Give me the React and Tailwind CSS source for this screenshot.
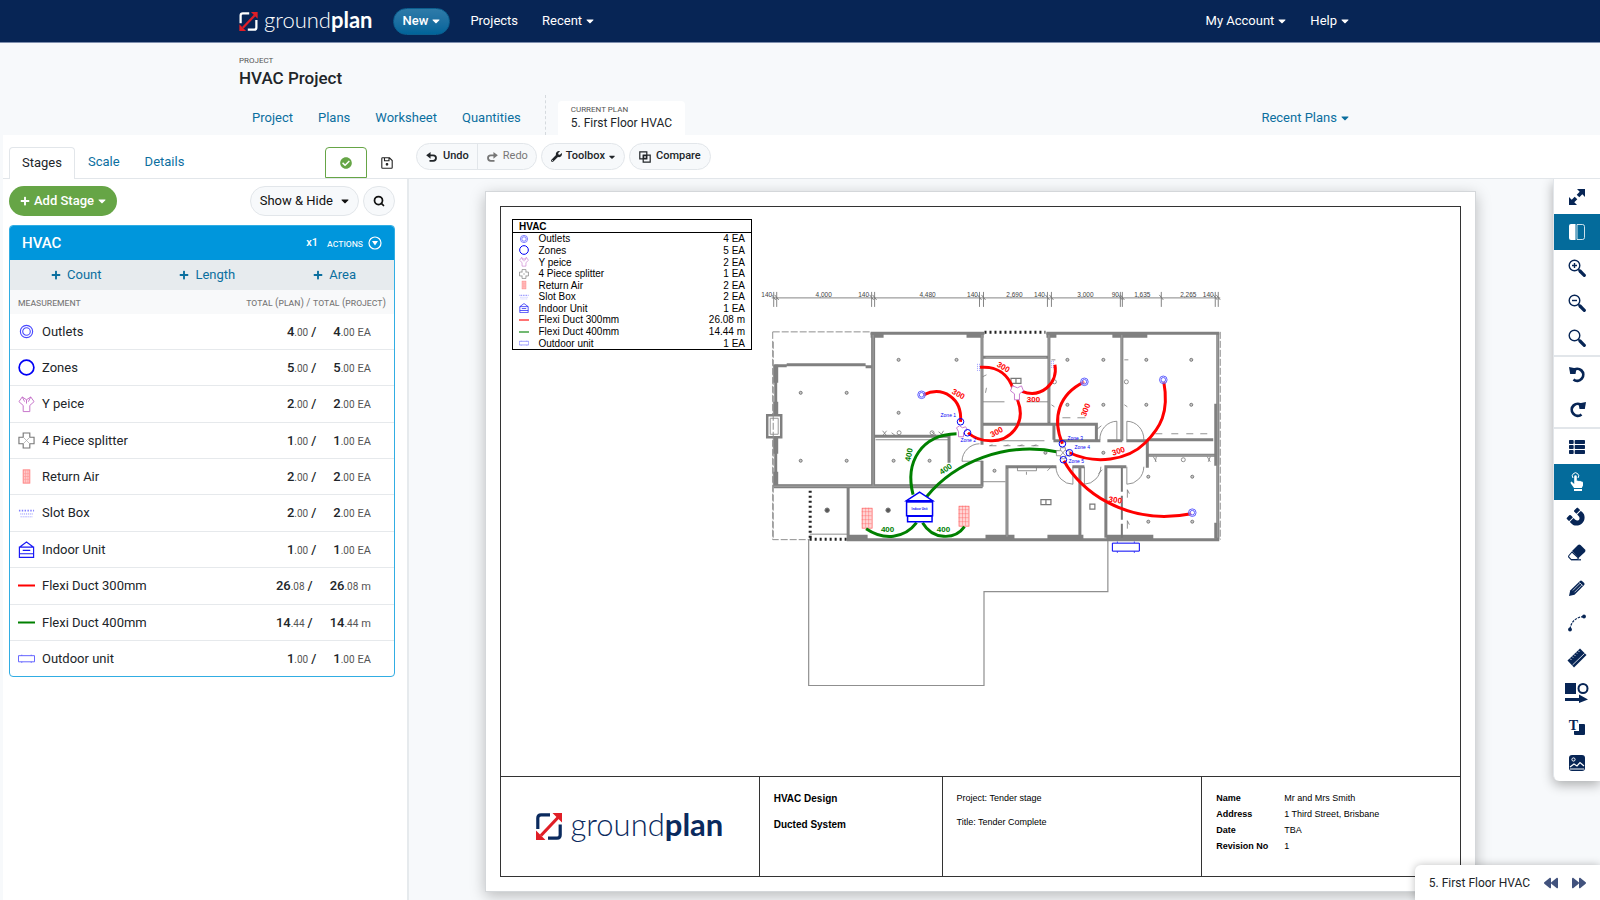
import { FaCaretDown, FaCheckCircle, FaMagnet, FaPlus, FaThList, FaWrench } from 'react-icons/fa';
import { FaBackward, FaForward } from 'react-icons/fa';
import { Search } from 'lucide-react';
import { clsx } from 'clsx';

const measurements = [
    { name: 'Outlets', icon: 'outlet', total: '4.00', unit: 'EA', legend: '4 EA' },
    { name: 'Zones', icon: 'zone', total: '5.00', unit: 'EA', legend: '5 EA' },
    { name: 'Y peice', icon: 'ypiece', total: '2.00', unit: 'EA', legend: '2 EA' },
    { name: '4 Piece splitter', icon: 'splitter', total: '1.00', unit: 'EA', legend: '1 EA' },
    { name: 'Return Air', icon: 'return', total: '2.00', unit: 'EA', legend: '2 EA' },
    { name: 'Slot Box', icon: 'slot', total: '2.00', unit: 'EA', legend: '2 EA' },
    { name: 'Indoor Unit', icon: 'indoor', total: '1.00', unit: 'EA', legend: '1 EA' },
    { name: 'Flexi Duct 300mm', icon: 'red', total: '26.08', unit: 'm', legend: '26.08 m' },
    { name: 'Flexi Duct 400mm', icon: 'green', total: '14.44', unit: 'm', legend: '14.44 m' },
    { name: 'Outdoor unit', icon: 'outdoor', total: '1.00', unit: 'EA', legend: '1 EA' },
];

function Symbol({ type, className }) {
    return (
        <svg viewBox="0 0 18 18" className={className} fill="none" aria-hidden="true">
            {type === 'outlet' && (
                <g stroke="#4a4aff" strokeWidth="1.200">
                    <circle cx="9" cy="9" r="6.500" />
                    <circle cx="9" cy="9" r="4" />
                </g>
            )}
            {type === 'zone' && <circle cx="9" cy="9" r="7.800" stroke="#0000f5" strokeWidth="1.800" />}
            {type === 'ypiece' && (
                <path d="M5.500 16.500V10L1 6l3.500-5L9 4l4.500-3L17 6l-4.500 4v6.500zM9 4v4M4.500 1l2.500 5M13.500 1L11 6" stroke="#c36fc8" />
            )}
            {type === 'splitter' && (
                <g>
                    <path d="M5.500 1h7v4.500H17v7h-4.500V17h-7v-4.500H1v-7h4.500z" stroke="#777" strokeWidth="1.200" />
                    <path d="M6 6l6 6M12 6l-6 6" stroke="#aaa" strokeWidth=".8" />
                </g>
            )}
            {type === 'return' && (
                <g>
                    <rect x="5.500" y="2" width="7" height="14" fill="#ffc9c9" stroke="#ff8080" />
                    <path d="M8 2v14M10.500 2v14M6 6h6M6 9h6M6 12h6" stroke="#ff9a9a" strokeWidth=".7" />
                </g>
            )}
            {type === 'slot' && (
                <g stroke="#8080ff">
                    <path d="M1 6h16" strokeWidth="2" strokeDasharray="1.500 1.500" />
                    <path d="M2.500 9.500h13" strokeDasharray="1 1" />
                    <path d="M2.500 12.500h13" stroke="#b9b9ff" strokeDasharray="2 .5" />
                </g>
            )}
            {type === 'indoor' && (
                <path d="M1.500 6.500L9 1l7.500 5.500M1.500 6.500h15V17.300h-15zM1.500 13.500h15M5 10h8" stroke="#1a1af5" strokeWidth="1.300" />
            )}
            {type === 'red' && <path d="M0 9h18" stroke="red" strokeWidth="2" />}
            {type === 'green' && <path d="M0 9h18" stroke="green" strokeWidth="2" />}
            {type === 'outdoor' && (
                <path d="M.5 6h17v6.500H.5zM4 5v1M14 5v1M4 12.500v1M14 12.500v1" stroke="#5c5cff" />
            )}
        </svg>
    );
}

function LogoMark({ className }) {
    return (
        <svg viewBox="0 0 26 27" className={className} aria-hidden="true">
            <path d="M14 1.800H5Q1.800 1.800 1.800 5v11M12 25.200h9Q24.200 25.200 24.200 22V11.500" fill="none" stroke="currentColor" strokeWidth="3.200" />
            <path d="M5 22.500L22 4.500" stroke="#e01e26" strokeWidth="3.200" />
            <path d="M16.500 0H26v9.500zM0 17.500V27h9.500z" fill="#e01e26" />
        </svg>
    );
}

function Header() {
    return (
        <header className="border-b border-[#7f8fae] bg-[#072555] pr-3 text-white">
            <div className="mx-auto flex h-[42px] max-w-[1110px] items-center text-[13px]">
                <a href="#home" className="flex items-center gap-[6px]">
                    <LogoMark className="h-[19px] w-[19px]" />
                    <span className="pb-[3px] font-['Lato',sans-serif] text-[22px] leading-6 font-light">
                        ground<b className="font-bold">plan</b>
                    </span>
                </a>
                <button type="button" className="ml-5 flex h-[27px] items-center gap-1 rounded-full border border-[#0b5f8f] bg-gradient-to-b from-[#2e7ba9] to-[#00649a] px-[9px] font-medium">
                    New <FaCaretDown className="h-3 w-2" />
                </button>
                <a href="#projects" className="ml-5">Projects</a>
                <button type="button" className="ml-6 flex items-center gap-1">
                    Recent <FaCaretDown className="h-3 w-2" />
                </button>
                <div className="ml-auto flex gap-6">
                    <button type="button" className="flex items-center gap-1">
                        My Account <FaCaretDown className="h-3 w-2" />
                    </button>
                    <button type="button" className="flex items-center gap-1">
                        Help <FaCaretDown className="h-3 w-2" />
                    </button>
                </div>
            </div>
        </header>
    );
}

function ProjectBar() {
    return (
        <div className="bg-[#f7f9fb] pr-3">
            <div className="mx-auto max-w-[1110px]">
                <p className="pt-3 text-[8px] leading-3 text-[#555]">PROJECT</p>
                <h1 className="text-[17px] leading-[22px] font-medium text-[#212529]">HVAC Project</h1>
                <div className="mt-[6px] flex h-10 text-[13px] text-[#0b6f9f]">
                    <nav className="flex items-center gap-[25px] border-r border-dashed border-[#d5dade] pr-6 pl-[13px] pt-[6px]">
                        <a href="#project">Project</a>
                        <a href="#plans">Plans</a>
                        <a href="#worksheet">Worksheet</a>
                        <a href="#quantities">Quantities</a>
                    </nav>
                    <a href="#plan" className="mt-[6px] ml-3 rounded-t bg-white px-[13px] pt-[3px] text-[#212529]">
                        <span className="block text-[8px] leading-3 text-[#555]">CURRENT PLAN</span>
                        <span className="block text-xs leading-[14px]">5. First Floor HVAC</span>
                    </a>
                    <button type="button" className="ml-auto flex items-center gap-1 pt-[6px]">
                        Recent Plans <FaCaretDown className="h-3 w-2" />
                    </button>
                </div>
            </div>
        </div>
    );
}

function Amount({ value }) {
    const [whole, decimals] = value.split('.');
    return (
        <>
            <span className="font-medium text-[#212529]">{whole}</span>
            <span className="text-[10px]">.{decimals}</span>
        </>
    );
}

function StagesPanel() {
    return (
        <aside className="flex w-[409px] shrink-0 flex-col border-l-[3px] border-l-[#f7f9fb]">
            <div className="mt-3 flex h-8 border-b border-[#e2e6ea] pl-[6px] text-[13px] text-[#0b6f9f]">
                <button type="button" className="-mb-px rounded-t border border-b-0 border-[#e2e6ea] bg-white px-3 pb-[2px] text-[#212529]">Stages</button>
                <button type="button" className="px-[13px] pb-[2px]">Scale</button>
                <button type="button" className="px-3 pb-[2px]">Details</button>
                <button type="button" aria-label="Saved" className="ml-auto flex w-[42px] items-center justify-center rounded-t-sm border border-[#66a546] text-[#66a546]">
                    <FaCheckCircle className="h-3 w-3" />
                </button>
                <button type="button" aria-label="Save" className="mr-[2px] flex w-10 items-center justify-center text-[#222]">
                    <svg viewBox="0 0 12 12" className="h-3 w-3" fill="none" stroke="currentColor" strokeWidth="1.100">
                        <path d="M1.500.8h7l2.700 2.700v7q0 .7-.7.7h-9q-.7 0-.7-.7v-9q0-.7.7-.7zM3.500 1v2.700h4.500V1" />
                        <circle cx="6" cy="7.300" r=".8" fill="currentColor" />
                    </svg>
                </button>
            </div>
            <div className="flex-1 border-r-2 border-[#e6eaed] pt-[7px] pr-3 pb-6 pl-[6px]">
                <div className="flex h-[30px] text-[13px]">
                    <button type="button" className="flex items-center gap-1 rounded-full bg-[#66a546] px-[11px] font-medium text-white">
                        <FaPlus className="h-[10px] w-[10px]" /> Add Stage <FaCaretDown className="h-3 w-2" />
                    </button>
                    <button type="button" className="ml-auto flex items-center gap-2 rounded-full border border-[#e2e6ea] bg-[#f7f9fb] px-[9px] text-[#111]">
                        Show &amp; Hide <FaCaretDown className="h-3 w-2" />
                    </button>
                    <button type="button" aria-label="Search" className="ml-1 flex w-8 items-center justify-center rounded-full border border-[#e2e6ea] bg-[#f7f9fb] text-[#111]">
                        <Search className="h-3 w-3" strokeWidth={3.500} />
                    </button>
                </div>

                <section className="mt-[9px] overflow-hidden rounded border border-[#31ade3]">
                    <div className="flex h-[34px] items-center bg-[#0096dc] px-3 text-white">
                        <h2 className="text-[15px] font-medium">HVAC</h2>
                        <span className="ml-auto text-[11px] font-medium">x1</span>
                        <button type="button" className="ml-[9px] flex items-center gap-[5px] text-[10px]">
                            <span className="[font-variant:small-caps]">actions</span>
                            <svg viewBox="0 0 14 14" className="h-[14px] w-[14px]" aria-hidden="true">
                                <circle cx="7" cy="7" r="6" fill="none" stroke="currentColor" strokeWidth="1.200" />
                                <path d="M4 5h6L7 9.500z" fill="currentColor" />
                            </svg>
                        </button>
                    </div>
                    <div className="flex h-[30px] items-center justify-between bg-[#e7ebee] pr-[38px] pl-[41px] text-[13px] text-[#0b6f9f]">
                        {['Count', 'Length', 'Area'].map((kind) => (
                            <button key={kind} type="button" className="flex items-center gap-[6px]">
                                <FaPlus className="h-[10px] w-[10px]" /> {kind}
                            </button>
                        ))}
                    </div>
                    <table className="h-[386px] w-full text-[13px] text-[#212529]">
                        <thead>
                            <tr className="h-6 bg-[#f8f9fa] text-[10px] text-[#777] [font-variant:small-caps]">
                                <th className="pl-2 text-left font-normal">measurement</th>
                                <th className="pr-2 text-right font-normal">total (plan) / total (project)</th>
                            </tr>
                        </thead>
                        <tbody>
                            {measurements.map((m) => (
                                <tr key={m.name} className="border-b border-[#e6e9ec] last:border-0">
                                    <td className="pl-2">
                                        <span className="flex items-center gap-[7px]">
                                            <Symbol type={m.icon} className="h-[17px] w-[17px]" /> {m.name}
                                        </span>
                                    </td>
                                    <td className="pr-[23px] text-right text-[#555]">
                                        <Amount value={m.total} />
                                        <span className="mr-[17px] ml-[3px] font-medium text-[#212529]">/</span>
                                        <Amount value={m.total} />
                                        <span className="ml-[3px] text-[11px]">{m.unit}</span>
                                    </td>
                                </tr>
                            ))}
                        </tbody>
                    </table>
                </section>
            </div>
        </aside>
    );
}

function UndoArrow({ className }) {
    return (
        <svg viewBox="0 0 14 12" className={className} aria-hidden="true">
            <path d="M3 4h5.500a3.300 3.300 0 0 1 0 6.600H4" fill="none" stroke="currentColor" strokeWidth="2.200" />
            <path d="M5.300 0v8L0 4z" fill="currentColor" />
        </svg>
    );
}

function EditBar() {
    return (
        <div className="flex h-11 gap-1 border-b border-[#e2e6ea] pt-2 pl-[7px] text-[11px] font-medium text-[#212529]">
            <div className="flex h-[27px] overflow-hidden rounded-full border border-[#e2e6ea] bg-[#f7f9fb]">
                <button type="button" className="flex items-center gap-[5px] border-r border-[#e2e6ea] pr-2 pl-[9px]">
                    <UndoArrow className="h-[10px] w-3" /> Undo
                </button>
                <button type="button" disabled className="flex items-center gap-[5px] pr-2 pl-2 font-normal text-[#777]">
                    <UndoArrow className="h-[10px] w-3 -scale-x-100" /> Redo
                </button>
            </div>
            <button type="button" className="flex h-[27px] items-center gap-1 rounded-full border border-[#e2e6ea] bg-[#f7f9fb] px-[9px]">
                <FaWrench className="h-[11px] w-[11px]" /> Toolbox <FaCaretDown className="h-3 w-[6px]" />
            </button>
            <button type="button" className="flex h-[27px] items-center gap-[5px] rounded-full border border-[#e2e6ea] bg-[#f7f9fb] px-[9px]">
                <svg viewBox="0 0 12 12" className="h-3 w-3" stroke="currentColor" strokeWidth="1.200" aria-hidden="true">
                    <path d="M4.500 4.500h3v3h-3z" fill="#bbb" />
                    <path d="M.8.800h7v7h-7zM4.200 4.200h7v7h-7z" fill="none" />
                </svg>
                Compare
            </button>
        </div>
    );
}

const dimensions = [
    [767, '140'], [824, '4,000'], [864, '140'], [928, '4,480'], [973, '140'], [1015, '2,690'],
    [1040, '140'], [1086, '3,000'], [1116, '90'], [1143, '1,635'], [1189, '2,265'], [1209, '140'],
];

const ticks = [774, 777, 872, 875, 980, 984, 1048, 1052, 1121, 1123, 1162, 1216, 1219];

const lights = [
    [899, 360], [957, 360], [899, 413], [801, 393], [847, 393], [801, 461], [847, 461], [894, 461], [930, 461],
    [995, 471], [1068, 360], [1104, 360], [1068, 405], [1104, 405], [1147, 360], [1192, 360], [1147, 405],
    [1192, 405], [1149, 477], [1193, 477], [1149, 522], [1193, 522], [1104, 453], [1046, 453],
];

const ductLabels = [
    [959, 394, 28, '300'], [1004, 367, 30, '300'], [1034, 399, 0, '300'], [997, 432, -28, '300'],
    [1086, 410, -68, '300'], [1119, 451, -18, '300'], [1116, 500, 8, '300'],
    [909, 455, -80, '400'], [946, 469, -35, '400'], [888, 529, 0, '400'], [944, 529, 0, '400'],
];

const zones = [
    [961, 422, 941, 417], [968, 433, 961, 442], [1063, 444, 1068, 440], [1070, 453, 1075, 449], [1064, 460, 1069, 463],
];

function FloorPlan() {
    return (
        <svg viewBox="501 207 960 570" className="block w-full font-['Liberation_Sans',Arial,sans-serif]" fill="none">
            {/* dimension string */}
            <g stroke="#777" strokeWidth=".9">
                <path d="M772 298H1221" />
                {ticks.map((x) => <path key={x} d={`M${x} 292v15M${x - 2} 295l4 5`} />)}
            </g>
            <g fill="#444" fontSize="6.500" textAnchor="middle">
                {dimensions.map(([x, label]) => <text key={x} x={x} y="297">{label}</text>)}
            </g>

            {/* roof line and patio */}
            <g stroke="#8f8f8f">
                <path d="M773 332H871M773 332V540H810M1221 332V540" strokeDasharray="7 2" />
                <path d="M809 540V686H984.500V592H1108.500V541" strokeWidth="1.200" />
                <path d="M810 534.500h38M983 482h23M983 402h22M1027 402h22M876 440h74M983 441h62M1123 334v106" />
            </g>
            <g stroke="#222" strokeWidth="3" strokeDasharray="2 3">
                <path d="M810.500 491v48M810 539.500h39M985 332.500h61" />
            </g>

            {/* walls */}
            <g stroke="#808080" strokeWidth="3">
                <path d="M871 333.500H985M1047 333.500H1220M774 486.500H983M776 487V366H787M866 367h7M787 365h79" />
                <path d="M875 436.500H951M949.500 437v26M982.500 333V445M982.500 461V487M848.500 487V540H1220M1218.500 333V540" />
                <path d="M983 357.500H1049M1049.500 333V424M983 424.500H1097V441M1054.500 424V440M1054 441H1101M1108 441h15M1122.500 333V441" />
                <path d="M1127 441h21V468M1148 455.500h68M1148 440h66M1007.500 538V467H1057M1007 467h50M1073 467h12M1080.500 467V538M1105 467h22M1106.500 467V538" />
            </g>
            <path d="M873.500 333V487M774 486.500H983" stroke="#808080" strokeWidth="4" />
            <path d="M776 365v18M776 402v14M776 438v16M776 472v15M871 335.500h13M967 335.500h17M1047 335.500h10M1113 335.500h35M1217.500 404v62M1217.500 523v16M986 537.500h29M1048 537.500h36M1107 537.500h47M849 537.500h19" stroke="#808080" strokeWidth="5" />
            <g stroke="#fff" strokeWidth=".6">
                <path d="M774 486.500H983M873.500 335V486M982.500 335V440M986 357.500H1047M1122.500 335V440M1049.500 335V422M1150 455.500h65M1218.500 335V538M1007.500 469V537" strokeOpacity=".45" />
            </g>
            <path d="M767.500 415.500h14v22h-14z" fill="#fff" stroke="#808080" strokeWidth="2.500" />
            <path d="M770.500 418.500h8v16h-8z" stroke="#999" />
            <path d="M773.500 342v198" stroke="#8f8f8f" strokeDasharray="7 2" />

            {/* doors, robes and fixtures */}
            <g stroke="#777" strokeWidth=".8">
                <path d="M962.500 461.500H983M962.500 461.500A18 18 0 0 1 980 444" />
                <path d="M1100.500 440A17 18 0 0 1 1117.500 421.500V440M1127.500 440V421.500A17 18 0 0 1 1144.500 440" />
                <path d="M1144.500 467A17 18 0 0 1 1127.500 484.500V467M1056.500 467A17 18 0 0 0 1073.500 484.500V467M1101.500 467A17 18 0 0 1 1085 484.500V467" />
                <path d="M1011.500 378.500h5v5h-5zM1016.500 378.500h5v5h-5zM1041.500 500h5v5h-5zM1046.500 500h5v5h-5zM1090.500 504.500h5v5h-5z" strokeWidth="1.200" />
                <path d="M1122.500 468V538" strokeWidth="2" strokeDasharray="24 4" />
                <path d="M1018 467v4h19v-4M1027 472v3M987 388l-1 5M983 377l4-2" />
                <path d="M883 431l4 5M883 436l4-5M892 433l4 3M932 432l5 4M939 432l5 4M941 436l3-5" />
                <path d="M990 446h7M1004 446h7M1018 446h7M1032 446h7M1063 418h8M1078 418h8M1156 434h7M1172 434h7M1187 434h7M1201 434h7M990 446l3-1M1006 446l3-1M1020 446l3-1M1034 446l3-1" />
                <path d="M1052 360h4M1052 405l3 2M1125 360h4M1125 405l3 2M1097 430l5-4M1154 457l3 5M1157 457l-1 5M1208 457l3 5M1211 457l-2 5M1128 490v8M1128 521v8M1128 490l2 4M1128 521l2 4M1048 471l5-5M1099 474l4-4" />
                <circle cx="899.500" cy="433" r="2" />
                <circle cx="932.500" cy="433" r="2" />
                <circle cx="1127" cy="382" r="2" />
                <circle cx="1055" cy="382" r="2" />
                <circle cx="1184" cy="460" r="2" />
            </g>
            <g stroke="#777" fill="#c8c8c8">
                {lights.map(([x, y]) => <circle key={`${x}-${y}`} cx={x} cy={y} r="1.500" />)}
                <circle cx="827.500" cy="510.500" r="2.200" fill="#555" />
                <circle cx="888.500" cy="510.500" r="2.200" fill="#555" />
            </g>

            {/* return air grilles */}
            {[[862, 508], [959, 506]].map(([x, y]) => (
                <g key={x} stroke="#ff5a5a" strokeWidth=".7">
                    <rect x={x + 0.5} y={y + 0.5} width="10" height="20" fill="#ffd4d4" />
                    <path d={`M${x + 4} ${y}v20M${x + 7} ${y}v20M${x} ${y + 4}h10M${x} ${y + 8}h10M${x} ${y + 12}h10M${x} ${y + 16}h10`} strokeWidth=".4" />
                </g>
            ))}

            {/* slot boxes */}
            <path d="M978 364v8M980 364v8M1052 361v7M1054 361v7" stroke="#9a9aff" strokeDasharray="1 1" />

            {/* 300mm ducts */}
            <g stroke="red" strokeWidth="3">
                <path d="M924 395C943 386 963 398 961 422" />
                <path d="M980.500 367.500C997 366 1009 374 1014 390M1018 400C1028 425 1009 442 991 441C980 441 974 438 968.500 433" />
                <path d="M1022.500 391.500C1041 399 1059 384 1055.500 365" />
                <path d="M1085 382C1060 394 1052 417 1063 444" />
                <path d="M1164.500 382C1170 413 1161 428 1146 443C1128 461 1096 465 1070 453" />
                <path d="M1064.500 461C1080 490 1126 527 1192 514" />
            </g>
            {/* 400mm ducts */}
            <g stroke="green" strokeWidth="3">
                <path d="M957 434C922 435 905 462 913.500 495" />
                <path d="M927 497C955 463 1005 441 1060 452.500" />
                <path d="M866.500 529C884 541 905 539 917 523" />
                <path d="M923 523C933 540 955 541 965 527" />
            </g>

            {/* fittings */}
            <path d="M959 437v-5l-2-4 3-2 3 2 3-1 2 3-4 3v4zM1015 400v-6l-4-3 2-5 5 2 4-2 2 5-4 3v6z" fill="#fff" stroke="#c36fc8" strokeWidth=".9" />
            <path d="M1061 448h5v3h4v5h-4v3h-5v-3h-4v-5h4zM1061 450l5 6M1066 450l-5 6" fill="#fff" stroke="#888" strokeWidth=".8" />
            <g stroke="#5050ff" strokeWidth=".9">
                {[[922, 395], [1085, 382], [1164, 380], [1193, 513]].map(([x, y]) => (
                    <g key={x}>
                        <circle cx={x} cy={y} r="3.800" fill="#fff" fillOpacity=".5" />
                        <circle cx={x} cy={y} r="2.300" />
                    </g>
                ))}
            </g>
            {zones.map(([cx, cy, x, y], i) => (
                <g key={cx}>
                    <circle cx={cx} cy={cy} r="3.300" stroke="#0000f5" />
                    <text x={x} y={y} fontSize="5" fill="#0000f5">{`Zone ${i + 1}`}</text>
                </g>
            ))}
            <g stroke="#0000f5" strokeWidth="1.500">
                <path d="M907 501L920 492.500L933 501z" fill="#fff" />
                <path d="M907 501.500h26v14.500h-26zM908 516.500h24.500v5.500H908z" fill="#fff" />
                <path d="M907 502h26" strokeWidth="2" />
                <path d="M1113 543.500h27v8h-27zM1118 543v-1M1135 543v-1M1118 553v-1M1135 553v-1" strokeWidth="1" />
            </g>
            <text x="920" y="510" fontSize="3" fontWeight="bold" fill="#0000f5" textAnchor="middle">Indoor Unit</text>
            <g fontSize="8" fontWeight="bold" textAnchor="middle">
                {ductLabels.map(([x, y, angle, label]) => (
                    <text key={`${x}-${y}`} x={x} y={y + 3} transform={`rotate(${angle} ${x} ${y})`} fill={label === '300' ? 'red' : 'green'}>{label}</text>
                ))}
            </g>
        </svg>
    );
}

function Legend() {
    return (
        <table className="absolute top-3 left-[11px] h-[131px] w-[240px] border border-black bg-white text-[10px] leading-[11px] text-black">
            <thead>
                <tr className="h-[13px] border-b border-black">
                    <th colSpan={3} className="pl-[6px] text-left font-bold">HVAC</th>
                </tr>
            </thead>
            <tbody>
                {measurements.map((m) => (
                    <tr key={m.name}>
                        <td className="w-[26px] pl-[6px]"><Symbol type={m.icon} className="h-[10px] w-[10px]" /></td>
                        <td>{m.name}</td>
                        <td className="pr-[6px] text-right">{m.legend}</td>
                    </tr>
                ))}
            </tbody>
        </table>
    );
}

function Sheet() {
    return (
        <div className="border border-[#d4d7da] bg-white p-[14px] font-['Liberation_Sans',Arial,sans-serif] text-black shadow-[0_4px_14px_rgba(0,0,0,0.25)]">
            <div className="border border-[#333]">
                <div className="relative">
                    <FloorPlan />
                    <Legend />
                </div>
                <div className="grid h-[100px] grid-cols-[259fr_183fr_260fr_258fr] border-t border-[#333] text-[9px]">
                    <div className="flex items-center justify-center gap-2 border-r border-[#333] text-[#0a2a5e]">
                        <LogoMark className="h-[27px] w-[26px]" />
                        <span className="pb-[5px] font-['Lato',sans-serif] text-[31px] leading-8 font-light">
                            ground<b className="font-bold">plan</b>
                        </span>
                    </div>
                    <div className="border-r border-[#333] pt-[15px] pl-[14px] text-[10px] leading-[13px] font-bold">
                        <p>HVAC Design</p>
                        <p className="mt-[13px]">Ducted System</p>
                    </div>
                    <div className="border-r border-[#333] pt-[15px] pl-[14px] leading-3">
                        <p>Project: Tender stage</p>
                        <p className="mt-3">Title: Tender Complete</p>
                    </div>
                    <dl className="grid grid-cols-[68px_1fr] content-start pt-[13px] pl-[14px] leading-4">
                        <dt className="font-bold">Name</dt>
                        <dd>Mr and Mrs Smith</dd>
                        <dt className="font-bold">Address</dt>
                        <dd>1 Third Street, Brisbane</dd>
                        <dt className="font-bold">Date</dt>
                        <dd>TBA</dd>
                        <dt className="font-bold">Revision No</dt>
                        <dd>1</dd>
                    </dl>
                </div>
            </div>
        </div>
    );
}

function Zoom({ sign }) {
    return (
        <svg viewBox="0 0 18 18" className="h-[18px] w-[18px]" fill="none" stroke="currentColor">
            <circle cx="6.500" cy="6.500" r="5.300" strokeWidth="1.400" />
            {sign && <path d={sign} strokeWidth="1.400" />}
            <path d="M10.300 10.300l2 2" strokeWidth="1.500" />
            <path d="M12 12l4.300 4.300" strokeWidth="3.200" strokeLinecap="round" />
        </svg>
    );
}

function Rotate({ className }) {
    return (
        <svg viewBox="0 0 17 17" className={className} fill="none">
            <path d="M4 4.500A6 6 0 1 1 4.500 13.500" stroke="currentColor" strokeWidth="2.800" />
            <path d="M0 1l7.500 1.500-1 5.500H1.200z" fill="currentColor" />
        </svg>
    );
}

const tools = [
    {
        label: 'Full screen',
        icon: (
            <svg viewBox="0 0 16 16" className="h-4 w-4" fill="currentColor">
                <path d="M8 0h8v8l-2.700-2.700-3 3L7.700 5.700l3-3zM8 16H0V8l2.700 2.700 3-3 2.600 2.600-3 3z" />
            </svg>
        ),
    },
    {
        label: 'Split view',
        active: true,
        icon: (
            <svg viewBox="0 0 16 16" className="h-4 w-4">
                <path d="M2 0h4.500v16H2Q0 16 0 14V2Q0 0 2 0z" fill="currentColor" />
                <path d="M8 .5h5.500Q15.500.5 15.500 2.500v11Q15.500 15.500 13.500 15.500H8z" fill="none" stroke="currentColor" strokeOpacity=".8" />
            </svg>
        ),
    },
    { label: 'Zoom in', icon: <Zoom sign="M4 6.500h5M6.500 4v5" /> },
    { label: 'Zoom out', icon: <Zoom sign="M4 6.500h5" /> },
    { label: 'Zoom to fit', icon: <Zoom /> },
    { label: 'Rotate left', line: true, icon: <Rotate className="h-[17px] w-[17px]" /> },
    { label: 'Rotate right', icon: <Rotate className="h-[17px] w-[17px] -scale-x-100" /> },
    { label: 'Legend', line: true, icon: <FaThList className="h-4 w-4" /> },
    {
        label: 'Select',
        active: true,
        icon: (
            <svg viewBox="0 0 16 20" className="h-5 w-4" fill="currentColor">
                <path d="M4 6a3.200 3.200 0 1 1 5 0" fill="none" stroke="currentColor" />
                <path d="M5.200 4.500a1.300 1.300 0 0 1 2.600 0V9l1-.6 1.200.8 1-.5 1.200.9 1-.2.8 1v3.200L12.800 16H5L1.800 11.500Q1 10 2.500 9.600L5.200 12z" />
                <path d="M5 17h8v2H5z" />
            </svg>
        ),
    },
    { label: 'Snap', icon: <FaMagnet className="h-4 w-4 -rotate-45" /> },
    {
        label: 'Eraser',
        icon: (
            <svg viewBox="0 0 18 17" className="h-[17px] w-[18px]">
                <path d="M4 7L10 1q1.200-1 2.500 0L17 5.500q1 1.200 0 2.500L10.500 14z" fill="currentColor" />
                <path d="M4 8L1 11.500q-.8 1 0 2L3 15.500h6L10.500 14z" fill="none" stroke="currentColor" strokeWidth="1.100" />
                <path d="M3 15.800h10" stroke="currentColor" strokeWidth="1.200" />
            </svg>
        ),
    },
    {
        label: 'Edit',
        icon: (
            <svg viewBox="0 0 16 16" className="h-4 w-4">
                <path d="M0 16l1.200-5.500L11 .9Q12 0 13 .9L15.200 3Q16 4 15.200 5L5.500 14.700z" fill="currentColor" />
                <path d="M3.800 10.500l7.500-7.500M5.500 12.300l7.500-7.500M10.500 2.500l3.200 3.200" stroke="#fff" strokeWidth=".7" />
            </svg>
        ),
    },
    {
        label: 'Curve',
        icon: (
            <svg viewBox="0 0 18 18" className="h-[18px] w-[18px]">
                <path d="M2 15Q4 3.500 16 2.500" fill="none" stroke="currentColor" strokeWidth="1.200" strokeDasharray="2.500 1" />
                <circle cx="2" cy="15.500" r="1.900" fill="currentColor" />
                <circle cx="16" cy="2.500" r="1.900" fill="currentColor" />
            </svg>
        ),
    },
    {
        label: 'Ruler',
        icon: (
            <svg viewBox="0 0 20 20" className="h-5 w-5">
                <path d="M.5 12.500L13 .5 19.500 7 7 19.500z" fill="currentColor" />
                <path d="M3 10.500l1.500 1.500M5 8.500l1.200 1.200M7 6.500l1.500 1.500M9 4.500l1.200 1.200M11 2.500l1.500 1.500M5.500 17L17.500 5.500" stroke="#fff" strokeWidth=".8" />
            </svg>
        ),
    },
    {
        label: 'Shapes',
        icon: (
            <svg viewBox="0 0 24 20" className="h-5 w-6">
                <path d="M0 0h11v11H0zM0 15h14v-3.500L23 16.500 14 20v-2H0z" fill="currentColor" />
                <circle cx="18" cy="5.500" r="4.500" fill="none" stroke="currentColor" strokeWidth="2" />
            </svg>
        ),
    },
    {
        label: 'Text',
        icon: (
            <span className="flex items-start font-['Liberation_Serif',serif] text-[14px] leading-[12px] font-bold">
                T
                <svg viewBox="0 0 11 11" className="mt-1 -ml-1 h-[11px] w-[11px]">
                    <path d="M5 0h5q1 0 1 1v9q0 1-1 1H1q-1 0-1-1V7h5z" fill="currentColor" />
                </svg>
            </span>
        ),
    },
    {
        label: 'Image',
        icon: (
            <svg viewBox="0 0 16 16" className="h-4 w-4">
                <rect width="16" height="16" rx="3" fill="currentColor" />
                <path d="M1 12l4-3 3 2 3-3.500 4 3.500M1 14h14" fill="none" stroke="#fff" strokeWidth="1.200" />
                <circle cx="4.500" cy="4.500" r="1.600" fill="none" stroke="#fff" />
            </svg>
        ),
    },
];

function ToolRail() {
    return (
        <div className="absolute top-0 right-0 w-[47px] overflow-hidden rounded-bl-md border-l border-[#e2e6ea] bg-white pb-px text-[#072555] shadow-[0_4px_12px_rgba(0,0,0,0.3)]">
            {tools.map((tool) => (
                <button
                    key={tool.label}
                    type="button"
                    aria-label={tool.label}
                    className={clsx(
                        'flex w-full items-center justify-center',
                        tool.active ? 'h-9 bg-[#046b9b] text-white' : 'h-[35px]',
                        tool.line && 'box-content border-t-2 border-[#e2e6ea]'
                    )}
                >
                    {tool.icon}
                </button>
            ))}
        </div>
    );
}

export default function App() {
    return (
        <div className="flex h-screen flex-col overflow-hidden bg-white font-['Roboto',sans-serif]">
            <Header />
            <ProjectBar />
            <div className="flex min-h-0 flex-1">
                <StagesPanel />
                <main className="flex min-w-0 flex-1 flex-col">
                    <EditBar />
                    <div className="relative min-h-0 flex-1 overflow-hidden bg-[#f7f9fb]">
                        <div className="pt-3 pr-[124px] pl-[76px]">
                            <Sheet />
                        </div>
                        <ToolRail />
                        <div className="absolute right-0 bottom-0 flex h-[35px] items-center rounded-tl-md bg-white px-[14px] text-xs text-[#212529] shadow-[0_0_8px_rgba(0,0,0,0.25)]">
                            5. First Floor HVAC
                            <button type="button" aria-label="Previous plan" className="ml-[14px] text-[#41527d]"><FaBackward className="h-[14px] w-[14px]" /></button>
                            <button type="button" aria-label="Next plan" className="ml-[14px] text-[#41527d]"><FaForward className="h-[14px] w-[14px]" /></button>
                        </div>
                    </div>
                </main>
            </div>
        </div>
    );
}
